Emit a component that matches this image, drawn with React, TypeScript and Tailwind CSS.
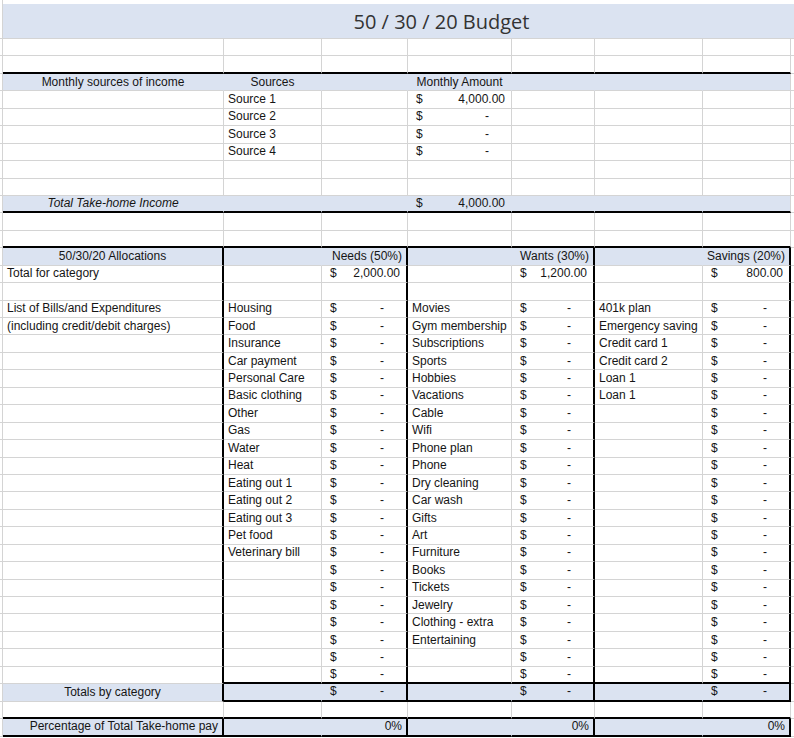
import React from "react";

type Cell = { t?: string; a?: "l" | "c" | "r"; m?: string; i?: boolean };
const W = ["w-[221px]", "w-[98px]", "w-[86px]", "w-[104px]", "w-[83px]", "w-[108px]", "w-[88px]"];
const ALL = [0, 1, 2, 3, 4, 5, 6];

type RowDef = { cells: Record<number, Cell>; fill?: number[]; tb?: number[]; tr?: number[]; noR?: number[] };

const needs = ["Housing","Food","Insurance","Car payment","Personal Care","Basic clothing","Other","Gas","Water","Heat","Eating out 1","Eating out 2","Eating out 3","Pet food","Veterinary bill"];
const wants = ["Movies","Gym membership","Subscriptions","Sports","Hobbies","Vacations","Cable","Wifi","Phone plan","Phone","Dry cleaning","Car wash","Gifts","Art","Furniture","Books","Tickets","Jewelry","Clothing - extra","Entertaining"];
const savings = ["401k plan","Emergency saving","Credit card 1","Credit card 2","Loan 1","Loan 1"];
const TR = [0, 2, 4, 6];

const rows: RowDef[] = [];
rows.push({ cells: {} });
rows.push({ cells: {}, tb: ALL });
rows.push({ cells: { 0: { t: "Monthly sources of income", a: "c" }, 1: { t: "Sources", a: "c" }, 3: { t: "Monthly Amount", a: "c" } }, fill: ALL, noR: ALL.slice(0, 6) });
rows.push({ cells: { 1: { t: "Source 1" }, 3: { m: "4,000.00" } } });
for (let k = 2; k <= 4; k++) rows.push({ cells: { 1: { t: "Source " + k }, 3: { m: "-" } } });
rows.push({ cells: {} });
rows.push({ cells: {} });
rows.push({ cells: { 0: { t: "Total Take-home Income", a: "c", i: true }, 3: { m: "4,000.00" } }, fill: ALL, tb: ALL, noR: ALL.slice(0, 6) });
rows.push({ cells: {} });
rows.push({ cells: {}, tb: ALL });
rows.push({ cells: { 0: { t: "50/30/20 Allocations", a: "c" }, 2: { t: "Needs (50%)", a: "r" }, 4: { t: "Wants (30%)", a: "r" }, 6: { t: "Savings (20%)", a: "r" } }, fill: ALL, tr: TR, noR: [1, 3, 5] });
rows.push({ cells: { 0: { t: "Total for category" }, 2: { m: "2,000.00" }, 4: { m: "1,200.00" }, 6: { m: "800.00" } }, tr: TR });
rows.push({ cells: {}, tr: TR });
for (let k = 0; k < 22; k++) {
  const c: Record<number, Cell> = { 2: { m: "-" }, 4: { m: "-" }, 6: { m: "-" } };
  if (k === 0) c[0] = { t: "List of Bills/and Expenditures" };
  if (k === 1) c[0] = { t: "(including credit/debit charges)" };
  if (needs[k]) c[1] = { t: needs[k] };
  if (wants[k]) c[3] = { t: wants[k] };
  if (savings[k]) c[5] = { t: savings[k] };
  rows.push({ cells: c, tr: TR, tb: k === 21 ? [1, 2, 3, 4, 5, 6] : undefined });
}
rows.push({ cells: { 0: { t: "Totals by category", a: "c" }, 2: { m: "-" }, 4: { m: "-" }, 6: { m: "-" } }, fill: ALL, tr: TR, tb: [1, 2, 3, 4, 5, 6], noR: [1, 3, 5] });
rows.push({ cells: {}, tb: ALL });
rows.push({ cells: { 0: { t: "Percentage of Total Take-home pay", a: "r" }, 2: { t: "0%", a: "r" }, 4: { t: "0%", a: "r" }, 6: { t: "0%", a: "r" } }, fill: ALL, tr: TR, tb: ALL, noR: [1, 3, 5] });

function CellView({ c }: { c?: Cell }) {
  if (!c) return null;
  if (c.m !== undefined) {
    return (
      <div className="flex w-full justify-between pl-[8px] pr-[6px]">
        <span>$</span>
        <span className={c.m === "-" ? "mr-[16px]" : ""}>{c.m}</span>
      </div>
    );
  }
  const al = c.a === "c" ? "justify-center" : c.a === "r" ? "justify-end" : "justify-start";
  return (
    <div className={`flex w-full overflow-hidden whitespace-nowrap px-[4px] ${al} ${c.i ? "italic" : ""}`}>{c.t}</div>
  );
}

export default function App() {
  return (
    <div className="w-[794px] h-[738px] overflow-hidden bg-white text-[12px] text-[#151515]" style={{ fontFamily: '"Liberation Sans", Arial, sans-serif' }}>
      <div className="flex h-[39px] border-b border-[#d4d4d4]">
        <div className="w-[3px] border-r border-[#d4d4d4]" />
        <div className="flex-1 mt-[4px] bg-[#dbe3f1] flex items-center justify-center pl-[86px] pt-[2px] text-[20px] text-[#333]" style={{ fontFamily: '"Open Sans", sans-serif' }}>
          50 / 30 / 20 Budget
        </div>
      </div>
      {rows.map((r, ri) => (
        <div key={ri} className="flex h-[17.45px] leading-[17px]">
          <div className="w-[3px] border-r border-b border-[#d4d4d4]" />
          {ALL.map((ci) => {
            const fill = r.fill?.includes(ci) ? "bg-[#dbe3f1]" : "";
            const tb = r.tb?.includes(ci) ? "border-b-2 border-b-black" : "border-b border-b-[#d4d4d4]";
            const tr = r.tr?.includes(ci)
              ? "border-r-2 border-r-black"
              : r.noR?.includes(ci)
              ? "border-r border-r-transparent"
              : "border-r border-r-[#d4d4d4]";
            return (
              <div key={ci} className={`${W[ci]} shrink-0 flex items-center ${fill} ${tb} ${tr}`}>
                <CellView c={r.cells[ci]} />
              </div>
            );
          })}
          <div className="flex-1 border-b border-[#d4d4d4]" />
        </div>
      ))}
    </div>
  );
}
